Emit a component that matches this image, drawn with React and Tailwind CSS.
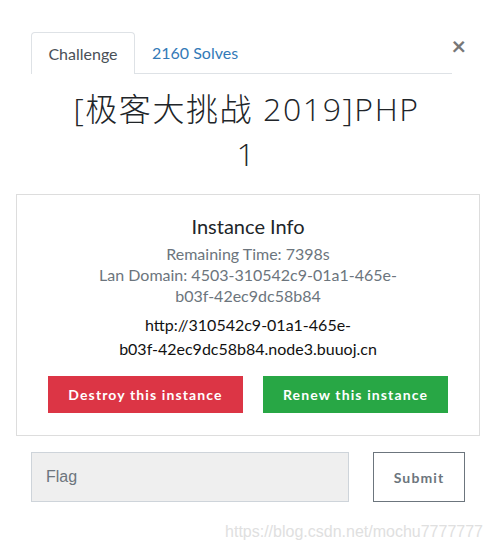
import React from 'react';

const lato = { fontFamily: 'Lato, "Noto Sans CJK SC", sans-serif' };

const App = () => {
    return (
        <div className="w-[493px] h-[548px] bg-white relative overflow-hidden" style={lato}>
            {/* tabs */}
            <div className="pt-[32px] pl-[31px] pr-[27px] flex items-start">
                <div className="flex-1 flex border-b border-[#dee2e6] h-[42px]">
                    <div className="w-[104px] h-[42px] border border-b-0 border-[#dee2e6] rounded-t-[4px] bg-white flex items-center justify-center text-[16px] text-[#495057] -mb-px">
                        Challenge
                    </div>
                    <div className="px-[17px] h-[41px] flex items-center text-[16px] text-[#337ab7]">
                        2160 Solves
                    </div>
                </div>
                <div className="w-[14px] flex justify-end pt-[1px] text-[25px] font-bold text-[#777] leading-none">×</div>
            </div>

            {/* title */}
            <h3 className="text-center text-[32px] leading-[45px] text-[#212529] mt-[12px] tracking-[0.05em]" style={{ fontFamily: '"Open Sans", "Noto Sans CJK SC", sans-serif', fontWeight: 300 }}>
                [极客大挑战 2019]PHP
                <br />
                1
            </h3>

            {/* instance box */}
            <div className="ml-[16px] mr-[13px] mt-[18px] border border-[#ddd] h-[242px] flex flex-col items-center pt-[17px]">
                <h4 className="text-[20px] leading-[28px] text-[#212529]">Instance Info</h4>
                <div className="text-[16px] leading-[21px] text-[#6c757d] text-center mt-[3px] w-[320px]">
                    <p>Remaining Time: 7398s</p>
                    <p>Lan Domain: 4503-310542c9-01a1-465e-b03f-42ec9dc58b84</p>
                </div>
                <p className="text-[16px] leading-[24px] text-[#111] text-center mt-[7px]">
                    http://310542c9-01a1-465e-
                    <br />
                    b03f-42ec9dc58b84.node3.buuoj.cn
                </p>
                <div className="flex gap-[20px] mt-[15px]">
                    <button className="w-[195px] h-[37px] bg-[#dc3545] text-white text-[14px] font-bold tracking-[0.08em]">
                        Destroy this instance
                    </button>
                    <button className="w-[185px] h-[37px] bg-[#28a745] text-white text-[14px] font-bold tracking-[0.08em]">
                        Renew this instance
                    </button>
                </div>
            </div>

            {/* flag form */}
            <div className="flex px-[31px] mt-[16px] gap-[24px]">
                <input
                    type="text"
                    placeholder="Flag"
                    className="w-[318px] shrink-0 h-[50px] bg-[#efefef] border border-[#ced4da] px-[14px] text-[16px] placeholder-[#6c757d] outline-none"
                    style={{ fontFamily: '"Liberation Sans", Arial, sans-serif' }}
                />
                <button className="w-[92px] shrink-0 h-[50px] border border-[#6c757d] text-[#6c757d] text-[14px] font-bold tracking-[0.08em]">
                    Submit
                </button>
            </div>

            {/* watermark */}
            <div className="absolute right-[10px] top-[520px] text-[16px] text-[#e0e0e0]" style={{ fontFamily: '"Liberation Sans", Arial, sans-serif' }}>
                https://blog.csdn.net/mochu7777777
            </div>
        </div>
    );
};

export default App;
